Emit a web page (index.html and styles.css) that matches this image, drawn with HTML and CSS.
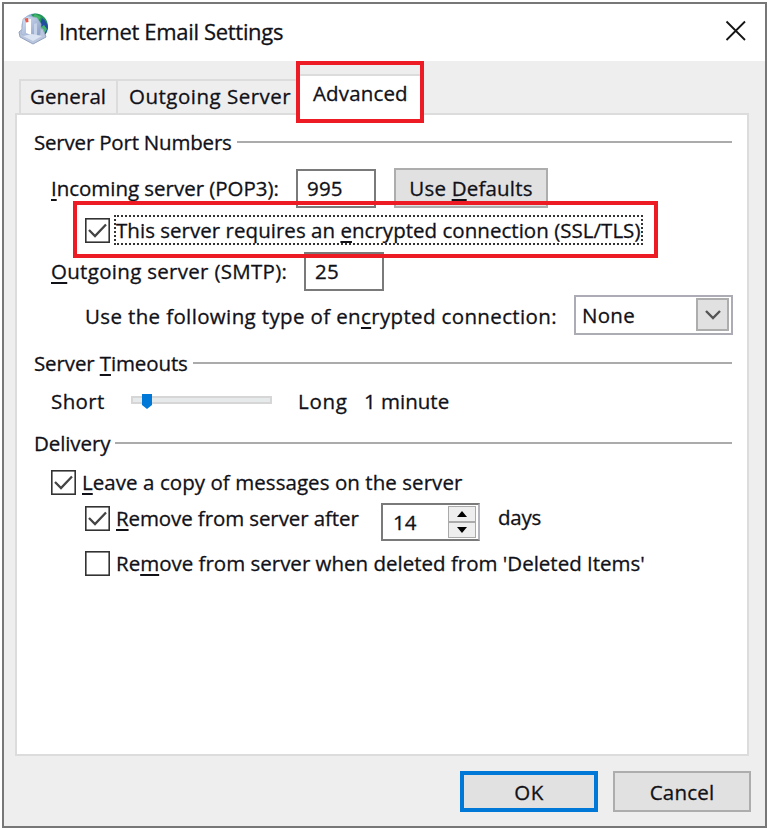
FILE: index.html
```html
<!DOCTYPE html>
<html lang="en">
<head>
<meta charset="utf-8">
<title>Internet Email Settings</title>
<link rel="stylesheet" href="styles.css">
</head>
<body>
<div class="window">
  <header class="titlebar">
    <svg class="app-icon" viewBox="0 0 32 34" width="32" height="34">
      <defs><linearGradient id="g" x1="0" y1="0" x2="1" y2="1"><stop offset="0" stop-color="#dce8f8"/><stop offset="1" stop-color="#7f93bf"/></linearGradient></defs>
      <circle cx="16.500" cy="14.500" r="13" fill="#8fb2dc"/>
      <path d="M17 1.500c8 0 13 6 13 13 0 4-1 7-4 9l-6-12-7-9z" fill="#24965a"/>
      <path d="M24 6c4 3 6 6 6 10l-3 7-5-11z" fill="#204e9f"/>
      <path d="M17 2l6 3-3 4-5-4zM26 13l3 4-3 5-4-6z" fill="#42b56b"/>
      <path d="M1 20l6-5 18 2 3 8-13 7L2 25z" fill="#b9c6dd" stroke="#93a2c1"/>
      <path d="M4 17L5 7l5-3 9 2 4 6-1 11-8 4-11-5z" fill="url(#g)" stroke="#a4b2ce" stroke-width=".7"/>
      <path d="M8 8l5-1v16l-5-2z" fill="#fff"/>
      <path d="M16 12l3-1v12h-3z" fill="#c5d2e8"/>
      <path d="M6.500 6.500l3.500-.5.500 4-2.500.5z" fill="#ed5b49"/>
      <path d="M5 24l10 5 9-5-10-2z" fill="#dbe4f2"/>
    </svg>
    <span class="title t">Internet Email Settings</span>
    <svg class="close" viewBox="0 0 22 22" width="22" height="22"><path d="M1.500 1.500l18.500 18.500M20 1.500L1.500 20"/></svg>
  </header>
  <nav class="tabs">
    <div class="tab general"><span class="t">General</span></div>
    <div class="tab outgoing"><span class="t">Outgoing Server</span></div>
    <div class="tab active"><span class="t">Advanced</span></div>
  </nav>
  <main class="panel">
    <h2 class="group ports"><span class="t">Server Port Numbers</span></h2>
    <div class="row indent">
      <label class="t incoming"><u>I</u>ncoming server (POP3):</label>
      <div class="field pop"><span class="t">995</span></div>
      <div class="button defaults"><span class="t">Use <u>D</u>efaults</span></div>
    </div>
    <div class="row nested">
      <svg class="check" viewBox="0 0 25 25"><rect x=".75" y=".75" width="23.500" height="23.500"/><path d="M4 12l6 6L21 6.500"/></svg>
      <div class="focus"><label class="t">This server requires an <u>e</u>ncrypted connection (SSL/TLS)</label></div>
      <div class="highlight ssl-mark"></div>
    </div>
    <div class="row indent">
      <label class="t smtp-label"><u>O</u>utgoing server (SMTP):</label>
      <div class="field smtp"><span class="t">25</span></div>
    </div>
    <div class="row nested">
      <label class="t type-label">Use the following type of en<u>c</u>rypted connection:</label>
      <div class="select"><span class="t">None</span><div class="drop"><svg viewBox="0 0 18 12" width="18" height="12"><path d="M2 2l7 7 7-7"/></svg></div></div>
    </div>
    <h2 class="group timeouts"><span class="t">Server <u>T</u>imeouts</span></h2>
    <div class="row indent timing">
      <span class="t short">Short</span>
      <div class="slider"><svg class="thumb" viewBox="0 0 10 15" width="10" height="15"><path d="M0 0h10v11l-5 4-5-4z"/></svg></div>
      <span class="t long">Long</span>
      <span class="t minute">1 minute</span>
    </div>
    <h2 class="group delivery"><span class="t">Delivery</span></h2>
    <div class="row indent">
      <svg class="check" viewBox="0 0 25 25"><rect x=".75" y=".75" width="23.500" height="23.500"/><path d="M4 12l6 6L21 6.500"/></svg>
      <label class="t after"><u>L</u>eave a copy of messages on the server</label>
    </div>
    <div class="row nested days">
      <svg class="check" viewBox="0 0 25 25"><rect x=".75" y=".75" width="23.500" height="23.500"/><path d="M4 12l6 6L21 6.500"/></svg>
      <label class="t after"><u>R</u>emove from server after</label>
      <div class="spinner"><span class="t">14</span><div class="steps"><div class="step"><svg viewBox="0 0 10 6" width="10" height="6"><path d="M0 6l5-6 5 6z"/></svg></div><div class="step"><svg viewBox="0 0 10 6" width="10" height="6"><path d="M0 0l5 6 5-6z"/></svg></div></div></div>
      <span class="t unit">days</span>
    </div>
    <div class="row nested">
      <svg class="check" viewBox="0 0 25 25"><rect x=".75" y=".75" width="23.500" height="23.500"/></svg>
      <label class="t after">Re<u>m</u>ove from server when deleted from 'Deleted Items'</label>
    </div>
  </main>
  <footer class="actions">
    <div class="button ok"><span class="t">OK</span></div>
    <div class="button cancel"><span class="t">Cancel</span></div>
  </footer>
</div>
<div class="highlight tab-mark"></div>
</body>
</html>
```
FILE: styles.css
```css
* { box-sizing: border-box; }
body { margin: 0; width: 768px; height: 830px; overflow: hidden; background: #fff; font: 20.5px/28px "Open Sans", "Noto Sans", sans-serif; color: #111118; -webkit-text-stroke: .3px #111118; }
.t { white-space: pre; flex: none; }
u { text-decoration-thickness: 2px; text-underline-offset: 3px; text-decoration-skip-ink: none; }
.window { margin: 2px 1px 0 2px; height: 826px; border: 2px solid #777; background: #eee; display: flex; flex-direction: column; }
.titlebar { height: 57px; flex: none; background: #fff; display: flex; align-items: center; padding: 0 18px 4px 14px; }
.app-icon { flex: none; margin: -3px 9px 0 0; }
.title { font-size: 22px; letter-spacing: -.32px; }
.close { margin: 1px 0 0 auto; fill: none; stroke: #151515; stroke-width: 1.8; }
.tabs { display: flex; align-items: flex-end; height: 52px; padding-left: 15px; flex: none; }
.tab { height: 34px; border: 2px solid #dcdcdc; border-bottom: 0; padding-top: 1px; }
.general { width: 99px; padding-left: 9px; letter-spacing: .1px; }
.outgoing { width: 181px; border-left: 0; padding-left: 11px; letter-spacing: .5px; }
.active { width: 123px; height: 41px; margin-bottom: -2px; background: #fff; padding: 3px 0 0 14px; border-left: 0; position: relative; z-index: 1; letter-spacing: .15px; }
.panel { margin-left: 11px; width: 734px; height: 643px; flex: none; background: #fff; border: 2px solid #dcdcdc; display: grid; grid-template-rows: 53px 40px 44px 38px 51px 44px 34px 48px 30px 50px 32px; align-content: start; }
.group { margin: 0; padding: 0 15px 0 17px; font: inherit; display: flex; align-items: center; }
.group::after { content: ""; flex: 1; height: 2px; background: #ababab; margin-left: 5px; }
.ports { letter-spacing: -.2px; }
.timeouts { letter-spacing: -.12px; }
.delivery { letter-spacing: -.1px; }
.row { display: flex; align-items: center; position: relative; }
.indent { padding-left: 34px; }
.nested { padding-left: 68px; }
.incoming { width: 229px; letter-spacing: -.03px; }
.smtp-label { width: 237px; letter-spacing: .3px; }
.type-label { width: 473px; letter-spacing: .36px; }
.field { height: 39px; width: 80px; border: 2px solid #7a7a7a; background: #fff; display: flex; align-items: center; padding-left: 9px; letter-spacing: .2px; }
.pop { margin-left: 16px; }
.smtp { margin-left: 16px; }
.button { height: 40px; background: #e1e1e1; border: 2px solid #adadad; display: flex; align-items: center; justify-content: center; }
.defaults { width: 154px; margin-left: 18px; letter-spacing: .2px; }
.check { width: 25px; height: 25px; flex: none; fill: none; stroke: #333; stroke-width: 1.700; }
.check path { stroke: #444; stroke-width: 2.300; }
.after { margin-left: 6px; }
.indent .after { letter-spacing: .06px; }
.days .after { width: 243px; letter-spacing: -.1px; }
.focus { margin-left: 4px; width: 529px; height: 30px; border: 2px dotted #333; display: flex; align-items: center; letter-spacing: .03px; }
.select { width: 159px; height: 40px; border: 2px solid #acacb4; margin-left: 16px; display: flex; align-items: center; justify-content: space-between; padding: 0 2px 0 6px; position: relative; top: -1px; letter-spacing: .3px; }
.drop { width: 33px; height: 33px; border: 2px solid #adadad; background: #e1e1e1; display: flex; align-items: center; justify-content: center; }
.drop path { fill: none; stroke: #555; stroke-width: 2.400; }
.timing { padding-bottom: 2px; }
.short { width: 55px; letter-spacing: .4px; }
.long { width: 51px; letter-spacing: .75px; }
.slider { width: 141px; height: 8px; margin: 0 26px 0 25px; background: #e7eaea; border: 2px solid #d6d6d6; position: relative; top: -1px; }
.thumb { position: absolute; left: 9px; top: -4px; fill: #0078d7; }
.minute { margin-left: 15px; }
.days .check, .days .after { margin-top: -8px; }
.spinner { width: 99px; height: 38px; margin-left: 22px; border: 2px solid #7a7a7a; border-right-color: #b5b5bd; display: flex; align-items: center; justify-content: space-between; padding-left: 10px; }
.steps { width: 30px; height: 34px; padding: 1px 2px 1px 0; display: grid; grid-template-rows: 1fr 1fr; }
.step { border: 1px solid #aaa; background: #eee; display: flex; align-items: center; justify-content: center; }
.unit { margin: -10px 0 0 18px; letter-spacing: -.2px; }
.actions { display: flex; gap: 15px; padding: 15px 14px 0 0; justify-content: flex-end; }
.actions .button { width: 138px; height: 41px; }
.actions .ok { border: 4px solid #0078d7; letter-spacing: .5px; }
.cancel { letter-spacing: .2px; }
.highlight { position: absolute; border: 4px solid #ed1c24; z-index: 2; }
.ssl-mark { left: 56px; top: -7px; width: 585px; height: 57px; }
.tab-mark { left: 296px; top: 61px; width: 128px; height: 62px; }
```
